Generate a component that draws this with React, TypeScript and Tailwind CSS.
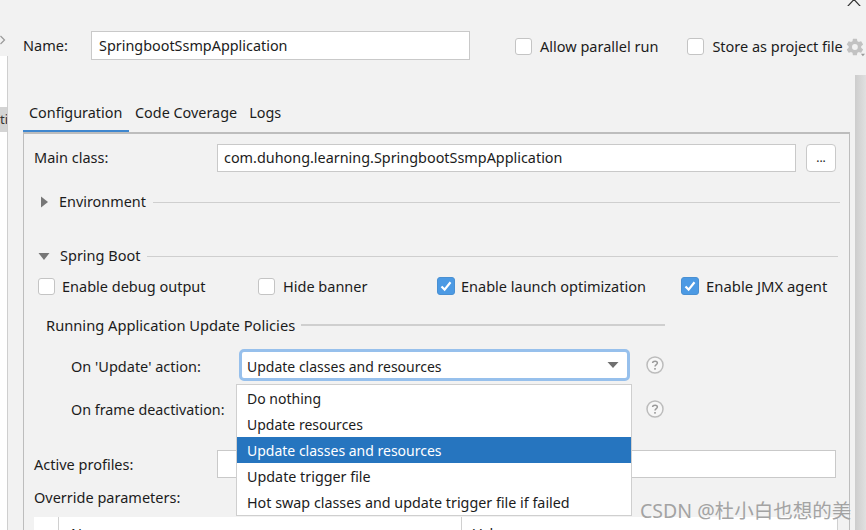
import React from "react";

const Check = ({ checked, label, className = "", gap = "ml-[8px]", text = "" }: { checked?: boolean; label: string; className?: string; gap?: string; text?: string }) => (
  <div className={`flex items-center h-[18px] ${className}`}>
    {checked ? (
      <span className="w-[18px] h-[18px] rounded-[3px] bg-[#4c9ae4] border border-[#4a90d2] flex items-center justify-center shrink-0">
        <svg width="14" height="14" viewBox="0 0 14 14" fill="none">
          <path d="M2.5 7.5 L5.6 10.6 L11.5 3.2" stroke="#fff" strokeWidth="2.2" />
        </svg>
      </span>
    ) : (
      <span className="w-[17px] h-[17px] rounded-[3px] bg-white border border-[#c4c4c4] shrink-0" />
    )}
    <span className={`${gap} ${text} whitespace-nowrap leading-[18px]`}>{label}</span>
  </div>
);

const Help = () => (
  <svg width="18" height="18" viewBox="0 0 18 18" fill="none">
    <circle cx="9" cy="9" r="8" stroke="#bcbcbc" strokeWidth="1.5" fill="#f7f7f7" />
    <path d="M6.6 7 C6.8 4.6 11.4 4.6 11.4 7 C11.4 8.6 9 8.6 9 10.6" stroke="#9a9a9a" strokeWidth="1.5" fill="none" />
    <rect x="8.2" y="12" width="1.6" height="1.7" fill="#9a9a9a" />
  </svg>
);

const items = [
  { t: "Do nothing", c: "text-[14px]" },
  { t: "Update resources", c: "text-[14px]" },
  { t: "Update classes and resources", c: "text-[14px] bg-[#2675bf] text-white" },
  { t: "Update trigger file", c: "text-[14.33px]" },
  { t: "Hot swap classes and update trigger file if failed", c: "text-[14.33px]" },
];

export default function App() {
  return (
    <div
      className="relative w-[866px] h-[530px] overflow-hidden flex bg-[#f2f2f2] text-[#1c1c1c] text-[14.5px]"
      style={{ fontFamily: '"Noto Sans", "Noto Sans CJK SC", sans-serif' }}
    >
      {/* left tree */}
      <div className="w-[23px] shrink-0 flex flex-col">
        <div className="h-[56px] pt-[35px] shrink-0">
          <svg width="6" height="10" viewBox="0 0 6 10" fill="none">
            <path d="M0.5 1 L4.5 5 L0.5 9" stroke="#9a9a9a" strokeWidth="1.2" />
          </svg>
        </div>
        <div className="w-[8px] flex-1 bg-white border-r border-[#cfcfcf] pt-[51px]">
          <div className="h-[25px] bg-[#d4d4d4] overflow-hidden text-[#333] leading-[25px] text-[13px]">ti</div>
        </div>
      </div>

      {/* main */}
      <div className="w-[843px] h-[530px] flex flex-col">
        <div className="h-[31px] flex justify-end pr-[5px] shrink-0">
          <svg width="14" height="6" viewBox="0 0 14 6" fill="none">
            <path d="M0.5 6.5 L7 -0.5 L13.5 6.5" stroke="#333" strokeWidth="1.2" />
          </svg>
        </div>

        {/* name row */}
        <div className="h-[29px] flex items-center shrink-0">
          <span className="w-[68px] leading-[29px]">Name:</span>
          <div className="w-[379px] h-[29px] bg-white border border-[#c9c9c9] pl-[7px] leading-[27px] text-[14.4px]">
            SpringbootSsmpApplication
          </div>
          <Check label="Allow parallel run" className="ml-[45px] mt-[1px]" />
          <Check label="Store as project file" className="ml-[29px] mt-[1px]" />
          <svg className="ml-[2px] mt-[3px]" width="20" height="20" viewBox="0 0 24 24" fill="#c2c2c2">
            <path d="M19.4 13c.04-.33.06-.66.06-1s-.02-.67-.07-1l2.1-1.64a.5.5 0 0 0 .12-.64l-2-3.46a.5.5 0 0 0-.6-.22l-2.49 1a7.3 7.3 0 0 0-1.73-1l-.38-2.65A.49.49 0 0 0 13.9 2h-4a.49.49 0 0 0-.49.42L9.03 5.07c-.62.26-1.2.6-1.73 1l-2.49-1a.5.5 0 0 0-.6.22l-2 3.46a.49.49 0 0 0 .12.64L4.43 11c-.05.33-.08.67-.08 1s.03.67.08 1l-2.1 1.64a.5.5 0 0 0-.12.64l2 3.46c.12.22.38.3.6.22l2.49-1c.53.4 1.1.74 1.73 1l.38 2.65c.04.24.25.42.49.42h4c.25 0 .46-.18.49-.42l.38-2.65c.62-.26 1.2-.6 1.73-1l2.49 1c.23.09.49 0 .6-.22l2-3.46a.5.5 0 0 0-.12-.64L19.4 13zM11.9 15.5a3.5 3.5 0 1 1 0-7 3.5 3.5 0 0 1 0 7z" />
            <path d="M19 20 L24 20 L21.5 23 Z" fill="#9a9a9a" />
          </svg>
        </div>

        {/* body */}
        <div className="mt-[15px] flex-1 min-h-0 flex">
          <div className="w-[827px] flex flex-col">
            {/* tabs */}
            <div className="h-[58px] pt-[25px] flex shrink-0 text-[14.4px]">
              <div className="w-[106px] h-[33px] border-b-[3px] border-[#3f87cf] pl-[6px] leading-[25px]">
                Configuration
              </div>
              <div className="ml-[6px] leading-[25px]">Code Coverage</div>
              <div className="ml-[12px] leading-[25px]">Logs</div>
            </div>

            {/* panel */}
            <div className="flex-1 min-h-0 border-l border-r border-t-2 border-[#bdbdbd] -mt-[1px] pl-[10px] flex flex-col">
              <div className="mt-[10px] h-[28px] flex items-center shrink-0">
                <span className="w-[183px]">Main class:</span>
                <div className="w-[579px] h-[28px] bg-white border border-[#c9c9c9] pl-[6px] leading-[26px] text-[14.4px]">
                  com.duhong.learning.SpringbootSsmpApplication
                </div>
                <div className="ml-[10px] w-[30px] h-[28px] bg-white border border-[#c9c9c9] rounded-[4px] text-center leading-[26px] text-[12px]">
                  ...
                </div>
              </div>

              <div className="mt-[20px] h-[20px] flex items-center shrink-0">
                <svg className="ml-[6px]" width="9" height="12" viewBox="0 0 9 12">
                  <path d="M1 0.5 L8 6 L1 11.5 Z" fill="#777" />
                </svg>
                <span className="ml-[10px] text-[14.4px]">Environment</span>
                <div className="ml-[7px] w-[687px] h-px bg-[#cfcfcf]" />
              </div>

              <div className="mt-[34px] h-[20px] flex items-center shrink-0">
                <svg className="ml-[4px]" width="12" height="9" viewBox="0 0 12 9">
                  <path d="M0.5 1 L11.5 1 L6 8 Z" fill="#777" />
                </svg>
                <span className="ml-[10px]">Spring Boot</span>
                <div className="ml-[7px] w-[691px] h-px bg-[#cfcfcf]" />
              </div>

              <div className="mt-[11px] h-[18px] flex shrink-0">
                <Check label="Enable debug output" gap="ml-[7px]" className="ml-[4px] w-[220px]" />
                <Check label="Hide banner" className="w-[179px]" />
                <Check checked gap="ml-[6px]" label="Enable launch optimization" className="w-[244px]" />
                <Check checked gap="ml-[7px]" text="text-[14.85px]" label="Enable JMX agent" />
              </div>

              <div className="mt-[20px] h-[20px] flex items-center ml-[12px] shrink-0">
                <span className="text-[14.7px]">Running Application Update Policies</span>
                <div className="ml-[6px] w-[364px] h-[2px] bg-[#cfcfcf]" />
              </div>

              <div className="mt-[14px] h-[32px] flex items-center ml-[37px] shrink-0">
                <span className="w-[168px] mt-[3px]">On 'Update' action:</span>
                <div className="w-[391px] h-[32px] bg-white border-[3px] border-[#97c0ec] rounded-[5px] flex items-center justify-between pl-[5px] pr-[8px] text-[14px]">
                  <span className="mt-[3px]">Update classes and resources</span>
                  <svg width="12" height="8" viewBox="0 0 12 8">
                    <path d="M0.5 1 L11.5 1 L6 7 Z" fill="#6f6f6f" />
                  </svg>
                </div>
                <div className="ml-[16px] -mt-[1px]"><Help /></div>
              </div>

              <div className="mt-[12px] h-[32px] flex items-center ml-[37px] shrink-0">
                <span className="w-[168px] text-[14.3px] mt-[2px]">On frame deactivation:</span>
                <div className="w-[391px]" />
                <div className="ml-[16px]"><Help /></div>
              </div>

              <div className="mt-[25px] h-[28px] flex items-center shrink-0">
                <span className="w-[183px] mt-[2px]">Active profiles:</span>
                <div className="w-[619px] h-[28px] bg-white border border-[#c9c9c9]" />
              </div>

              <div className="mt-[10px] h-[20px] flex items-center shrink-0">Override parameters:</div>

              <div className="mt-[9px] w-[804px] flex-1 min-h-0 bg-white border-r border-[#d0d0d0] flex overflow-hidden">
                <div className="w-[25px] border-r border-[#d0d0d0]" />
                <div className="w-[403px] border-r border-[#d0d0d0] pl-[12px] leading-[32px]">Name</div>
                <div className="pl-[11px] leading-[32px]">Value</div>
              </div>
            </div>
          </div>

          {/* scrollbar */}
          <div className="ml-[5px] w-[11px] bg-gradient-to-r from-[#cdcdcd] to-[#e0e0e0]" />
        </div>
      </div>

      {/* popup */}
      <div className="absolute left-[236px] top-[384px] w-[396px] h-[132px] bg-white border border-[#cfcfcf]">
        {items.map(({ t, c }) => (
          <div key={t} className={`h-[26px] pl-[10px] leading-[28px] whitespace-nowrap ${c}`}>
            {t}
          </div>
        ))}
      </div>

      {/* watermark */}
      <div className="absolute left-[640px] top-[497px] text-[19.5px] leading-[28px] text-[#a3a3a3] whitespace-nowrap">
        CSDN @杜小白也想的美
      </div>
    </div>
  );
}
